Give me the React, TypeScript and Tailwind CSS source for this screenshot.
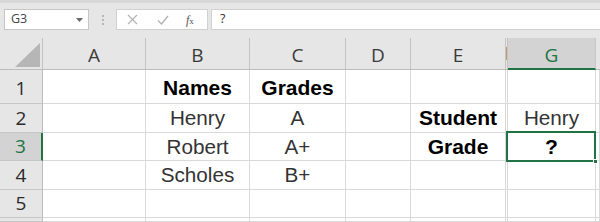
import React from "react";

const colW = [
  "w-[43px]",
  "w-[103px]",
  "w-[104px]",
  "w-[96px]",
  "w-[65px]",
  "w-[95px]",
  "w-[2px]",
  "w-[88px]",
  "flex-1",
];

const rowH = ["h-[34px]", "h-[29px]", "h-[28px]", "h-[29px]", "h-[28px]", "flex-1"];

type Cell = { t?: string; b?: boolean };

const data: Record<number, Record<number, Cell>> = {
  0: { 2: { t: "Names", b: true }, 3: { t: "Grades", b: true } },
  1: { 2: { t: "Henry" }, 3: { t: "A" }, 5: { t: "Student", b: true }, 7: { t: "Henry" } },
  2: { 2: { t: "Robert" }, 3: { t: "A+" }, 5: { t: "Grade", b: true }, 7: { t: "?", b: true } },
  3: { 2: { t: "Scholes" }, 3: { t: "B+" } },
  4: {},
  5: {},
};

const headers = ["", "A", "B", "C", "D", "E", "", "G", ""];

export default function App() {
  return (
    <div className="relative w-[600px] h-[222px] overflow-hidden bg-[#e6e6e6] flex flex-col [font-family:'Liberation_Sans',Arial,sans-serif]">
      {/* top strip */}
      <div className="h-[3px] bg-[#d7d7d7] shrink-0" />
      {/* toolbar */}
      <div className="h-[35px] shrink-0 flex items-start pt-[6px]">
        <div className="ml-[4px] w-[85px] h-[21px] bg-white border border-[#c6c6c6] flex items-center justify-between pl-[6px] pr-[5px] [font-family:'Open_Sans',sans-serif] text-[12.5px] text-[#444]">
          <span>G3</span>
          <svg width="7" height="4" viewBox="0 0 7 4">
            <polygon points="0,0 7,0 3.5,4" fill="#6a6a6a" />
          </svg>
        </div>
        <div className="w-[27px] h-[21px] flex flex-col items-center justify-center gap-[2px]">
          <div className="w-[2px] h-[2px] bg-[#b8b8b8]" />
          <div className="w-[2px] h-[2px] bg-[#b8b8b8]" />
          <div className="w-[2px] h-[2px] bg-[#b8b8b8]" />
        </div>
        <div className="w-[92px] h-[21px] bg-white border border-[#d0d0d0] flex items-center">
          <svg className="ml-[10px]" width="11" height="11" viewBox="0 0 11 11">
            <path d="M1 1 L10 10 M10 1 L1 10" stroke="#b3b3b3" strokeWidth="1.2" fill="none" />
          </svg>
          <svg className="ml-[19px]" width="12" height="10" viewBox="0 0 12 10">
            <path d="M1 5.5 L4.5 9 L11 1" stroke="#b3b3b3" strokeWidth="1.3" fill="none" />
          </svg>
          <span className="ml-[17px] italic text-[12px] text-[#555] [font-family:'Liberation_Serif',serif]">
            f<span className="text-[9px] not-italic">x</span>
          </span>
        </div>
        <div className="ml-[3px] flex-1 h-[21px] bg-white border border-[#d0d0d0] border-r-0 flex items-center pl-[8px] [font-family:'Open_Sans',sans-serif] text-[12.5px] text-[#333]">
          ?
        </div>
      </div>
      {/* header row */}
      <div className="h-[32px] shrink-0 flex border-b border-[#bcbcbc]">
        {headers.map((h, i) => {
          const sel = i === 7;
          return (
            <div
              key={i}
              className={
                colW[i] +
                " relative shrink-0 flex items-center justify-center pt-[4px] border-r [font-family:'Open_Sans',sans-serif] text-[19px] " +
                (sel
                  ? "bg-[#d3d3d3] text-[#217346] border-[#c6c6c6] border-b-2 border-b-[#217346] -mb-px"
                  : i === 8
                  ? "border-r-0 bg-[#e6e6e6]"
                  : "bg-[#e6e6e6] text-[#3a3a3a] border-[#c3c3c3]")
              }
            >
              {i === 0 && (
                <svg className="absolute left-[15px] top-[5px]" width="25" height="24" viewBox="0 0 25 24">
                  <polygon points="25,0 25,24 0,24" fill="#b6b6b6" />
                </svg>
              )}
              {i === 6 && <div className="absolute left-0 top-[9px] w-[1px] h-[13px] bg-[#c59b6a]" />}
              {h}
            </div>
          );
        })}
      </div>
      {/* body rows */}
      {rowH.map((rh, r) => (
        <div key={r} className={rh + " shrink-0 flex"}>
          {colW.map((cw, c) => {
            if (c === 0) {
              const sel = r === 2;
              return (
                <div
                  key={c}
                  className={
                    cw +
                    " shrink-0 flex items-center justify-center border-b border-[#c6c6c6] [font-family:'Open_Sans',sans-serif] text-[19px] " +
                    (r === 0 ? "pt-[3px] " : "") +
                    (sel
                      ? "bg-[#d3d3d3] text-[#217346] border-r-2 border-r-[#217346]"
                      : "bg-[#e6e6e6] text-[#2a2a2a] border-r border-r-[#bcbcbc]")
                  }
                >
                  {r < 5 ? r + 1 : ""}
                </div>
              );
            }
            const cell = data[r][c];
            return (
              <div
                key={c}
                className={
                  cw +
                  " shrink-0 bg-white flex items-center justify-center border-b border-r border-[#d9d9d9] " +
                  (r === 0 ? "pt-[3px] " : "") +
                  (cell?.b ? "font-bold text-[21px] text-black" : "text-[20.7px] text-[#333]")
                }
              >
                {cell?.t}
              </div>
            );
          })}
        </div>
      ))}
      {/* selection box */}
      <div className="absolute left-[506px] top-[131px] w-[90px] h-[31px] border-2 border-[#217346] pointer-events-none">
        <div className="absolute -right-[4px] -bottom-[4px] w-[5px] h-[5px] bg-[#217346] border border-white" />
      </div>
    </div>
  );
}
